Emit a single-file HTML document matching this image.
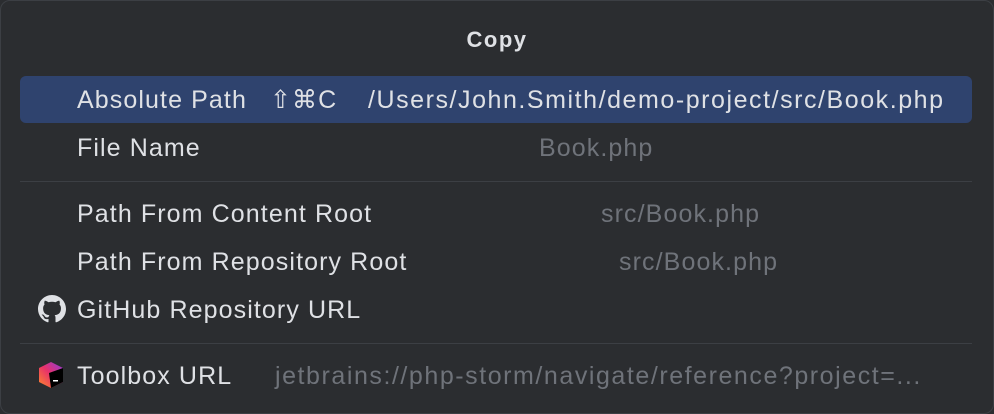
<!DOCTYPE html>
<html><head><meta charset="utf-8"><style>
html,body{margin:0;padding:0;width:994px;height:414px;background:#2b2d30;overflow:hidden;font-family:"Liberation Sans",sans-serif;}
.win{position:absolute;left:0;top:0;width:992px;height:412px;border:1px solid #3c3f44;border-radius:10px;background:#2b2d30;}
.t{position:absolute;white-space:nowrap;font-size:25px;letter-spacing:1.1px;color:#dfe1e5;line-height:30px;}
.w{letter-spacing:1.55px;}
.g{color:#6f737a;}
.sep{position:absolute;left:20px;width:952px;height:1px;background:#3c3f44;}
.hl{position:absolute;left:20px;top:76px;width:952px;height:47px;background:#2f436e;border-radius:6px;}
</style></head><body>
<div class="win"></div>
<div class="t" style="left:0;width:994px;text-align:center;top:25px;font-weight:bold;font-size:22px;letter-spacing:1.5px;">Copy</div>
<div class="hl"></div>
<div class="t" style="left:77px;top:85px;">Absolute Path</div>
<div class="t" style="left:270px;top:85px;">⇧⌘C</div>
<div class="t w" style="left:368px;top:85px;">/Users/John.Smith/demo-project/src/Book.php</div>
<div class="t" style="left:77px;top:133px;">File Name</div>
<div class="t g" style="left:539px;top:133px;">Book.php</div>
<div class="sep" style="top:181px"></div>
<div class="t" style="left:77px;top:199px;">Path From Content Root</div>
<div class="t g" style="left:601px;top:199px;">src/Book.php</div>
<div class="t" style="left:77px;top:247px;">Path From Repository Root</div>
<div class="t g" style="left:619px;top:247px;">src/Book.php</div>
<svg style="position:absolute;left:38px;top:295px" width="28" height="28" viewBox="0 0 16 16"><path fill="#dfe1e5" d="M8 0C3.58 0 0 3.58 0 8c0 3.54 2.29 6.53 5.47 7.59.4.07.55-.17.55-.38 0-.19-.01-.82-.01-1.49-2.01.37-2.530-.49-2.690-.94-.09-.23-.48-.94-.82-1.13-.28-.15-.68-.52-.01-.53.63-.01 1.08.58 1.23.82.72 1.21 1.87.87 2.33.66.07-.52.28-.87.51-1.07-1.78-.2-3.64-.89-3.64-3.95 0-.87.31-1.59.82-2.15-.08-.2-.36-1.02.08-2.12 0 0 .67-.21 2.2.82.64-.18 1.32-.27 2-.27.68 0 1.36.09 2 .27 1.53-1.04 2.2-.82 2.2-.82.44 1.1.16 1.92.08 2.12.51.56.82 1.27.82 2.15 0 3.07-1.87 3.75-3.65 3.95.29.25.54.73.54 1.48 0 1.07-.01 1.93-.01 2.2 0 .21.15.46.55.38A8.013 8.013 0 0016 8c0-4.42-3.58-8-8-8z"/></svg>
<div class="t" style="left:77px;top:295px;">GitHub Repository URL</div>
<div class="sep" style="top:343px"></div>
<svg style="position:absolute;left:39px;top:361px" width="26" height="28" viewBox="0 0 26 28"><defs><linearGradient id="a" x1="0" y1="1" x2="1" y2="0"><stop offset="0" stop-color="#ff8a2a"/><stop offset=".5" stop-color="#e8326a"/><stop offset="1" stop-color="#8d3bdc"/></linearGradient></defs><path d="M12 1 L24 7 L24 21 L12 27 L0 21 L0 7 Z" fill="url(#a)"/><path d="M10 12 L24 7 L24 21 L12 27 Z" fill="#000"/><rect x="14" y="19" width="5" height="1.5" fill="#fff"/></svg>
<div class="t" style="left:77px;top:361px;">Toolbox URL</div>
<div class="t g w" style="left:275px;top:361px;">jetbrains://php-storm/navigate/reference?project=...</div>
</body></html>
